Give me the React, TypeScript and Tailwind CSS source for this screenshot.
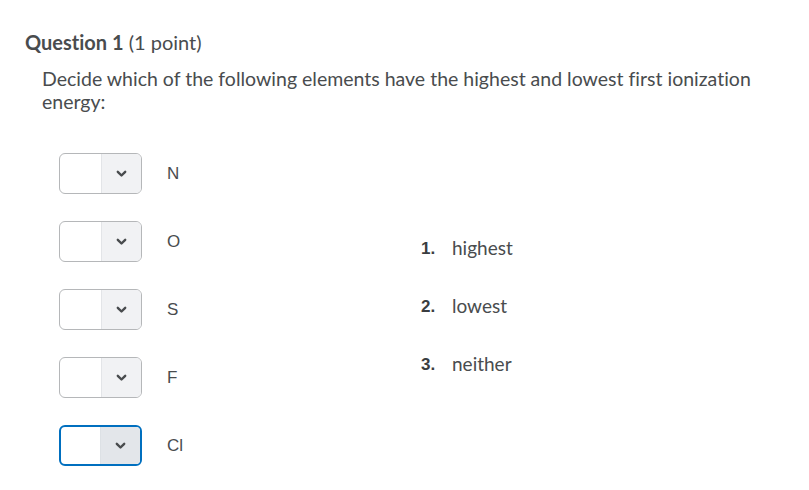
import React from "react";

const elements = ["N", "O", "S", "F", "Cl"];
const choices = ["highest", "lowest", "neither"];

const Chevron = () => (
  <svg width="11" height="8" viewBox="0 0 11 8" fill="none">
    <path d="M1.8 1.8 L5.5 5.5 L9.2 1.8" stroke="#494c4e" strokeWidth="2.4" strokeLinecap="round" strokeLinejoin="round" />
  </svg>
);

const Select = ({ focused }: { focused?: boolean }) => (
  <div
    className={
      focused
        ? "flex w-[83px] h-[41px] rounded-[6px] border-2 border-[#006fbf] overflow-hidden bg-white"
        : "flex w-[83px] h-[41px] rounded-[6px] border border-[#b5b7b9] overflow-hidden bg-white"
    }
  >
    <div className="flex-1" />
    <div
      className={
        focused
          ? "w-[40px] flex items-center justify-center bg-[#e3e6ea] border-l border-[#dde1e5]"
          : "w-[40px] flex items-center justify-center bg-[#f1f2f4] border-l border-[#e3e5e8]"
      }
    >
      <Chevron />
    </div>
  </div>
);

export default function App() {
  return (
    <div className="w-[809px] h-[490px] bg-white text-[#494c4e] font-['Lato',sans-serif] [font-variant-ligatures:none] relative overflow-hidden">
      <div className="pl-[25px] pt-[30px]">
        <h2 className="text-[20px] leading-[24px]">
          <span className="font-bold">Question 1</span> (1 point)
        </h2>
        <div className="pl-[17px] pt-[13px]">
          <p className="text-[19.5px] leading-[23px] w-[735px]">
            Decide which of the following elements have the highest and lowest first ionization energy:
          </p>
          <div className="flex pt-[40px] pl-[17px]">
            <div className="flex flex-col gap-[27px] w-[362px]">
              {elements.map((el, i) => (
                <div key={el} className="flex items-center">
                  <Select focused={i === elements.length - 1} />
                  <span className="ml-[25px] font-['Liberation_Sans',sans-serif] text-[17px]">{el}</span>
                </div>
              ))}
            </div>
            <ol className="flex flex-col gap-[35px] pt-[84px]">
              {choices.map((c, i) => (
                <li key={c} className="flex items-center h-[23px] text-[19px]">
                  <span className="w-[31px] font-['Liberation_Sans',sans-serif] text-[17px] font-bold text-[#3a3d40]">{i + 1}.</span>
                  <span>{c}</span>
                </li>
              ))}
            </ol>
          </div>
        </div>
      </div>
    </div>
  );
}
